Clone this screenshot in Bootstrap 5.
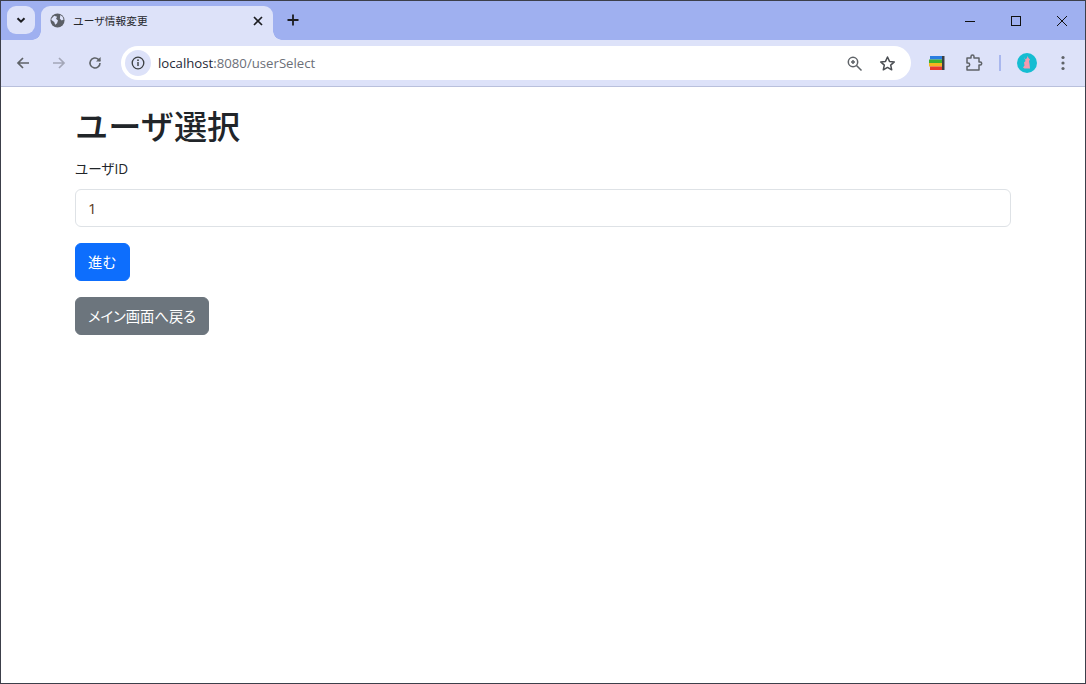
<!DOCTYPE html>
<html lang="ja">
<head>
<meta charset="utf-8">
<title>ユーザ情報変更</title>
<link rel="stylesheet" href="https://cdn.jsdelivr.net/npm/bootstrap@5.3.0/dist/css/bootstrap.min.css">
<style>
html,body{height:100%;overflow:hidden}
body{font-family:"Open Sans","Noto Sans CJK JP",sans-serif;color:#212529;background:#fff}
.win-frame{height:684px;border:1px solid #3c3f4a;display:flex;flex-direction:column;overflow:hidden}
.strip{height:39px;background:#9fb0f0;flex:none;padding-left:6px}
.tab-menu{width:28px;height:28px;margin-top:5px;background:#dde2f9;border-radius:9px}
.tab-live{width:232px;height:34px;margin:5px 0 0 6px;padding:0 9px 5px 9px;background:#dde2f9;border-radius:9px 9px 0 0;position:relative}
.tab-live::before,.tab-live::after{content:"";position:absolute;bottom:0;width:9px;height:9px;background:radial-gradient(circle at 0 0,transparent 8.5px,#dde2f9 9px)}
.tab-live::before{left:-9px}
.tab-live::after{right:-9px;background:radial-gradient(circle at 100% 0,transparent 8.5px,#dde2f9 9px)}
.tab-name{font:10.7px "Noto Sans CJK JP",sans-serif;color:#26282c;margin-left:8px}
.new-tab{margin:5px 0 0 13px;height:28px}
.win-btn{width:46px;height:39px}
.tools{height:47px;background:#dde2f9;flex:none;border-bottom:1px solid #b9c0dc;padding:0 14px 0 9px}
.nav-ico{width:26px;height:26px;margin-right:10px}
.omni{width:790px;height:34px;background:#fff;border-radius:17px;margin-left:3px;padding:0 15px 0 4px}
.info-pill{width:26px;height:26px;border-radius:50%;background:#dde2f9}
.url-text{font:13.2px "Open Sans","Noto Sans",sans-serif;margin-left:7px;color:#6c7078}
.url-host{color:#1f2937}
.ext-a{margin-left:18px}
.ext-b{margin-left:20px}
.sep-bar{width:2px;height:16px;background:#a9b7ee;margin:0 16px}
.dots-ico{margin-left:24px}
.page-h{font-size:33.2px;font-weight:500;line-height:48px;margin:14px 0 7px;font-family:"Noto Sans CJK JP",sans-serif}
.field-label,.btn{line-height:24px;font-feature-settings:"palt"}
.field-label{margin-bottom:8px;font-size:13.6px}
.btn{font-size:14.3px;padding:7px 12px 5px}
.btn-primary{padding-right:13px}
.form-control{color:#5a3a1a;font-size:15px;line-height:24px}
</style>
</head>
<body>
<div class="win-frame">
  <div class="strip d-flex align-items-start">
    <div class="tab-menu d-flex align-items-center justify-content-center">
      <svg width="12" height="12" viewBox="0 0 12 12"><path d="M2.500 4.200 6 7.700l3.500-3.500" fill="none" stroke="#1c1d21" stroke-width="2"/></svg>
    </div>
    <div class="tab-live d-flex align-items-center">
      <svg width="15" height="15" viewBox="0 0 16 16"><circle cx="8" cy="8" r="7.500" fill="#5b5f66"/><path d="M1.500 6l3-3 3 1-1 2 2 2-1 3-2 1.500-1-3-3-2zM11 2l2.500 2 1 3-2 1-2-2z" fill="#dde2f9"/></svg>
      <span class="tab-name flex-grow-1">ユーザ情報変更</span>
      <svg width="12" height="12" viewBox="0 0 12 12"><path d="M2 2l8 8M10 2l-8 8" stroke="#1c1d21" stroke-width="1.700"/></svg>
    </div>
    <div class="new-tab d-flex align-items-center">
      <svg width="14" height="14" viewBox="0 0 14 14"><path d="M7 1.500v11M1.500 7h11" stroke="#1c1d21" stroke-width="1.800"/></svg>
    </div>
    <div class="ms-auto d-flex">
      <div class="win-btn d-flex align-items-center justify-content-center"><svg width="12" height="12" viewBox="0 0 12 12"><path d="M1 6.500h10" stroke="#111" stroke-width="1"/></svg></div>
      <div class="win-btn d-flex align-items-center justify-content-center"><svg width="12" height="12" viewBox="0 0 12 12"><rect x="1.500" y="1.500" width="9" height="9" fill="none" stroke="#111"/></svg></div>
      <div class="win-btn d-flex align-items-center justify-content-center"><svg width="12" height="12" viewBox="0 0 12 12"><path d="M1 1l10 10M11 1 1 11" stroke="#111"/></svg></div>
    </div>
  </div>
  <div class="tools d-flex align-items-center">
    <div class="nav-ico d-flex align-items-center justify-content-center"><svg width="16" height="16" viewBox="0 0 16 16"><path d="M14 8H3M8 3 3 8l5 5" fill="none" stroke="#5f6368" stroke-width="1.700"/></svg></div>
    <div class="nav-ico d-flex align-items-center justify-content-center"><svg width="16" height="16" viewBox="0 0 16 16"><path d="M2 8h11M8 3l5 5-5 5" fill="none" stroke="#a3a7b8" stroke-width="1.700"/></svg></div>
    <div class="nav-ico d-flex align-items-center justify-content-center"><svg width="16" height="16" viewBox="0 0 16 16"><path d="M13 8a5 5 0 1 1-1.600-3.700L13 6" fill="none" stroke="#5f6368" stroke-width="1.600"/><path d="M13.600 2v4.600H9z" fill="#5f6368"/></svg></div>
    <div class="omni d-flex align-items-center">
      <div class="info-pill d-flex align-items-center justify-content-center"><svg width="14" height="14" viewBox="0 0 14 14"><circle cx="7" cy="7" r="5.800" fill="none" stroke="#3c4043" stroke-width="1.300"/><path d="M7 6v4" stroke="#3c4043" stroke-width="1.400"/><circle cx="7" cy="4.200" r=".9" fill="#3c4043"/></svg></div>
      <span class="url-text flex-grow-1"><span class="url-host">localhost</span>:8080/userSelect</span>
      <svg class="me-3" width="17" height="17" viewBox="0 0 17 17"><circle cx="7" cy="7" r="4.700" fill="none" stroke="#5f6368" stroke-width="1.500"/><path d="M10.500 10.500l5 5M5 7h4M7 5v4" stroke="#5f6368" stroke-width="1.500"/></svg>
      <svg width="17" height="17" viewBox="0 0 17 17"><path d="M8.500 2l2 4.400 4.800.5-3.600 3.200 1 4.700-4.200-2.400-4.200 2.400 1-4.700L1.700 6.900l4.800-.5z" fill="none" stroke="#4a4d52" stroke-width="1.500" stroke-linejoin="round"/></svg>
    </div>
    <svg class="ext-a" width="16" height="14" viewBox="0 0 16 14"><rect x="1" y="0" width="12" height="3.500" fill="#2a7de1"/><rect x="0" y="3.500" width="13" height="3.500" fill="#3cb02f"/><rect x="0" y="7" width="13" height="3.500" fill="#f5b51e"/><rect x="1" y="10.500" width="12" height="3.500" fill="#e8392d"/><rect x="13" y="0" width="2.500" height="14" fill="#3c4043"/></svg>
    <svg class="ext-b" width="18" height="18" viewBox="0 0 18 18"><path d="M2 4h4V2.500a1.500 1.500 0 0 1 3 0V4h5v4h1.200a1.500 1.500 0 0 1 0 3H14v5H2v-3.500h1a1.700 1.700 0 0 0 0-3.400H2z" fill="none" stroke="#5f6368" stroke-width="1.500" stroke-linejoin="round"/></svg>
    <div class="sep-bar"></div>
    <svg width="20" height="20" viewBox="0 0 20 20"><circle cx="10" cy="10" r="10" fill="#15bdd2"/><path d="M7 4l1.500 2.500L10 5l.5-2 1 2 1.500 1.500-1 1.500.5 3 .5 4.500H7.500L6 14.500l1.500-2-.5-3L8.500 8z" fill="#f29bb0"/></svg>
    <svg class="dots-ico" width="4" height="16" viewBox="0 0 4 16"><circle cx="2" cy="2.500" r="1.600" fill="#5f6368"/><circle cx="2" cy="8" r="1.600" fill="#5f6368"/><circle cx="2" cy="13.500" r="1.600" fill="#5f6368"/></svg>
  </div>
  <div class="container">
    <h1 class="page-h">ユーザ選択</h1>
    <form onsubmit="return false">
      <div class="mb-3">
        <label class="form-label field-label" for="uid">ユーザID</label>
        <input class="form-control" id="uid" type="text" value="1">
      </div>
      <button class="btn btn-primary d-block mb-3" type="submit">進む</button>
      <a class="btn btn-secondary" href="#">メイン画面へ戻る</a>
    </form>
  </div>
</div>
<script src="https://cdn.jsdelivr.net/npm/bootstrap@5.3.0/dist/js/bootstrap.bundle.min.js"></script>
</body>
</html>
